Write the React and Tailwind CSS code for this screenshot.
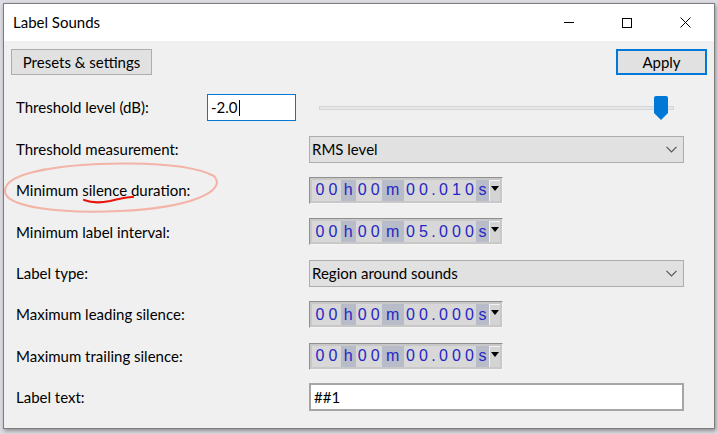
import React from 'react'

const ui = { fontFamily: 'Lato, "Noto Sans", sans-serif' }
const mono = { fontFamily: '"Liberation Sans", Arial, sans-serif' }

const Digit = ({ c }) => <span className="w-[13px] text-center">{c}</span>

const TimeBox = ({ value }) => {
  // value like "00.010"
  const secs = value.split('')
  return (
    <div className="flex h-[27px] w-[194px] border border-t-[#8f8f8f] border-l-[#8f8f8f] border-r-[#f4f4f4] border-b-[#f4f4f4] bg-[#c8c8c8] p-[2px] text-[16px] text-[#2626c4]" style={mono}>
      <div className="flex w-[29px] items-center justify-center bg-[#d8d8d8]"><Digit c="0" /><Digit c="0" /></div>
      <div className="flex w-[15px] items-center justify-center bg-[#b8bcc9]">h</div>
      <div className="flex w-[26px] items-center justify-center bg-[#d8d8d8]"><Digit c="0" /><Digit c="0" /></div>
      <div className="flex w-[22px] items-center justify-center bg-[#b8bcc9]">m</div>
      <div className="flex w-[73px] items-center justify-center bg-[#d8d8d8]">
        {secs.map((c, i) =>
          c === '.' ? <span key={i} className="w-[7px] text-center">.</span> : <Digit key={i} c={c} />
        )}
      </div>
      <div className="flex w-[13px] items-center justify-center bg-[#b8bcc9]">s</div>
      <div className="flex w-[11px] items-start justify-center border-t border-l border-[#f2f2f2] bg-[#d4d4d4] pt-[5px]">
        <svg width="8" height="5" viewBox="0 0 8 5"><path d="M0 0h8L4 5z" fill="#000" /></svg>
      </div>
    </div>
  )
}

const Select = ({ value }) => (
  <div className="flex h-[27px] w-[375px] items-center justify-between border border-[#adadad] bg-[#e1e1e1] pl-[2px] pr-[6px] text-[15px] text-black">
    <span>{value}</span>
    <svg width="11" height="7" viewBox="0 0 11 7"><path d="M0.5 0.8L5.5 5.8L10.5 0.8" fill="none" stroke="#555" strokeWidth="1.2" /></svg>
  </div>
)

const Row = ({ label, children }) => (
  <div className="flex h-[41.4px] items-center">
    <div className="w-[293px] text-[15px] text-black">{label}</div>
    {children}
  </div>
)

export default function App() {
  return (
    <div className="relative h-[434px] w-[718px] overflow-hidden bg-[#dcdce2]" style={ui}>
      <div className="ml-[3px] mt-[3px] flex h-[426px] w-[712px] flex-col border border-[#7d7d7d] bg-[#f0f0f0] shadow-[1px_2px_4px_rgba(0,0,0,0.35)]">
        {/* title bar */}
        <div className="flex h-[37px] shrink-0 items-center justify-between bg-white">
          <span className="pl-[9px] text-[15px] text-black">Label Sounds</span>
          <div className="flex h-full">
            <div className="flex w-[58px] items-center justify-center">
              <div className="h-px w-[10px] bg-black" />
            </div>
            <div className="flex w-[58px] items-center justify-center">
              <div className="h-[10px] w-[10px] border border-black" />
            </div>
            <div className="flex w-[58px] items-center justify-center">
              <svg width="11" height="11" viewBox="0 0 11 11"><path d="M0.5 0.5L10.5 10.5M10.5 0.5L0.5 10.5" stroke="#000" strokeWidth="1" /></svg>
            </div>
          </div>
        </div>

        {/* body */}
        <div className="flex flex-col px-[7px] pt-[8px]">
          <div className="flex items-center justify-between">
            <button className="h-[26px] w-[141px] border border-[#adadad] bg-[#e1e1e1] text-[15px] text-black">Presets &amp; settings</button>
            <button className="h-[26px] w-[91px] border-2 border-[#0078d7] bg-[#e1e1e1] text-[15px] text-black">Apply</button>
          </div>

          <div className="mt-[12px] flex flex-col pl-[5px]">
            <div className="flex h-[41.4px] items-center">
              <div className="w-[191px] text-[15px] text-black">Threshold level (dB):</div>
              <div className="flex h-[27px] w-[89px] items-center border border-[#0078d7] bg-white pl-[3px] text-[15px] text-black">
                -2.0<span className="ml-px h-[16px] w-px bg-black" />
              </div>
              <div className="ml-[23px] flex w-[355px] items-center">
                <div className="h-[4px] w-[349px] border border-[#d6d6d6] bg-[#e7e7e7]" />
                <svg className="relative -ml-[14px]" width="14" height="24" viewBox="0 0 14 24">
                  <path d="M2 0H12Q14 0 14 2V17L7 24L0 17V2Q0 0 2 0Z" fill="#0078d7" />
                </svg>
                <div className="h-[4px] w-[6px] border border-l-0 border-[#d6d6d6] bg-[#e7e7e7]" />
              </div>
            </div>
            <Row label="Threshold measurement:"><Select value="RMS level" /></Row>
            <Row label="Minimum silence duration:"><TimeBox value="00.010" /></Row>
            <Row label="Minimum label interval:"><TimeBox value="05.000" /></Row>
            <Row label="Label type:"><Select value="Region around sounds" /></Row>
            <Row label="Maximum leading silence:"><TimeBox value="00.000" /></Row>
            <Row label="Maximum trailing silence:"><TimeBox value="00.000" /></Row>
            <Row label="Label text:">
              <div className="flex h-[28px] w-[375px] items-center border-2 border-[#a6a6a6] bg-white pl-[3px] text-[15px] text-black">##1</div>
            </Row>
          </div>
        </div>
      </div>

      {/* hand-drawn annotation */}
      <svg className="pointer-events-none absolute left-0 top-0" width="718" height="434" viewBox="0 0 718 434">
        <path d="M34 172 C80 161 182 159 214 176 C228 191 190 208 120 211 C60 214 7 207 5 192 C4 181 18 175 46 169"
          fill="none" stroke="#f3b4a7" strokeWidth="2" />
        <path d="M84 200 C92 203 100 203 110 201 C118 199 126 197 133 197" fill="none" stroke="#e8140c" strokeWidth="2.2" strokeLinecap="round" />
      </svg>
    </div>
  )
}
